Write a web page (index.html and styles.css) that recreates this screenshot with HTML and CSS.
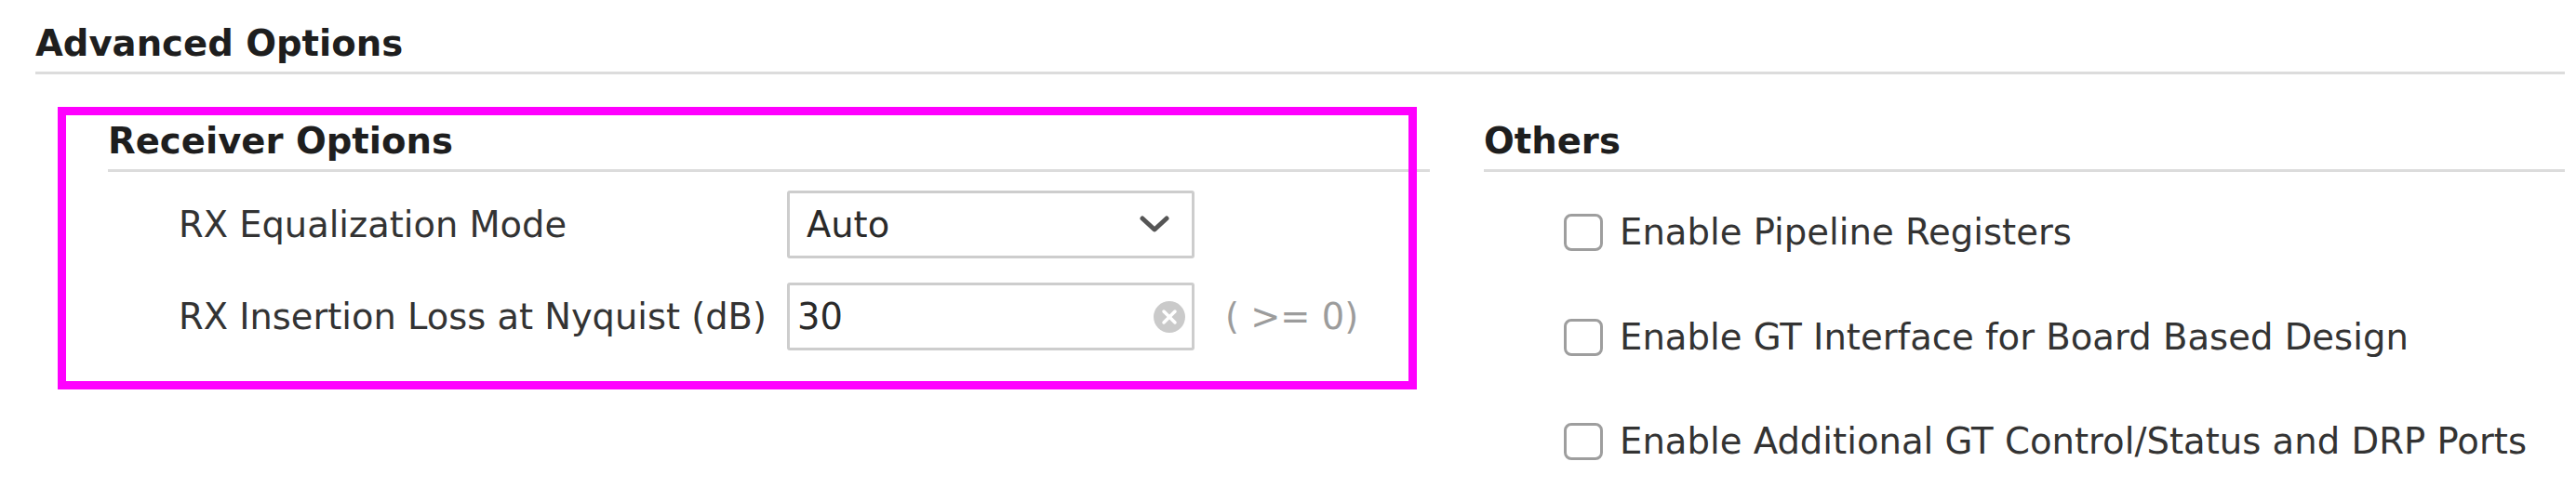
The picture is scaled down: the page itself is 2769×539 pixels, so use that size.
FILE: index.html
```html
<!DOCTYPE html>
<html lang="en">
<head>
    <meta charset="UTF-8">
    <title>Advanced Options</title>
    <link rel="stylesheet" href="styles.css">
</head>
<body>
    <div class="page">
        <h1 class="group-title">Advanced Options</h1>

        <div class="columns">
            <section class="panel panel-receiver">
                <h2 class="panel-title">Receiver Options</h2>
                <div class="field-grid">
                    <label class="field-label">RX Equalization Mode</label>
                    <div class="select-box">
                        <span class="select-value">Auto</span>
                        <svg class="chevron" width="32" height="19" viewBox="0 0 32 19">
                            <polyline points="3,3 16,15 29,3" fill="none" stroke="#555" stroke-width="5" stroke-linecap="round" stroke-linejoin="round"/>
                        </svg>
                    </div>
                    <span></span>

                    <label class="field-label">RX Insertion Loss at Nyquist (dB)</label>
                    <div class="text-box">
                        <span class="text-value">30</span>
                        <svg class="clear-icon" width="34" height="34" viewBox="0 0 34 34">
                            <circle cx="17" cy="17" r="17" fill="#cacaca"/>
                            <line x1="11" y1="11" x2="23" y2="23" stroke="#fff" stroke-width="3.5" stroke-linecap="round"/>
                            <line x1="23" y1="11" x2="11" y2="23" stroke="#fff" stroke-width="3.5" stroke-linecap="round"/>
                        </svg>
                    </div>
                    <span class="hint">( &gt;= 0)</span>
                </div>
            </section>

            <section class="panel panel-others">
                <h2 class="panel-title">Others</h2>
                <ul class="check-list">
                    <li><label><input type="checkbox"> Enable Pipeline Registers</label></li>
                    <li><label><input type="checkbox"> Enable GT Interface for Board Based Design</label></li>
                    <li><label><input type="checkbox"> Enable Additional GT Control/Status and DRP Ports</label></li>
                </ul>
            </section>
        </div>

        <!-- annotation frame drawn over the receiver panel -->
        <div class="highlight"></div>
    </div>
</body>
</html>
```

FILE: styles.css
```css
body {
    margin: 0;
    background: #fff;
    font-family: "DejaVu Sans", Verdana, sans-serif;
    color: #333;
}
.page {
    position: relative;
    padding: 0 12px 0 38px;
    height: 539px;
    box-sizing: border-box;
}
.group-title {
    margin: 0;
    padding: 22px 0 5px;
    font-size: 38.6px;
    line-height: 50px;
    font-weight: bold;
    color: #1e1e1e;
    border-bottom: 3px solid #dcdcdc;
}
.columns {
    display: flex;
    gap: 58px;
    margin-top: 47px;
    padding-left: 78px;
}
.panel-receiver {
    width: 1421px;
    flex: none;
}
.panel-others {
    flex: 1;
}
.panel-title {
    margin: 0;
    padding-bottom: 5px;
    font-size: 38.6px;
    line-height: 50px;
    font-weight: bold;
    color: #1e1e1e;
    border-bottom: 3px solid #dcdcdc;
}
.field-grid {
    display: grid;
    grid-template-columns: 654px 438px auto;
    grid-auto-rows: 73px;
    row-gap: 26px;
    align-items: center;
    margin-top: 20px;
    padding-left: 76px;
    font-size: 38.4px;
}
.field-label {
    white-space: nowrap;
    line-height: 44px;
}
.select-box,
.text-box {
    display: flex;
    align-items: center;
    height: 73px;
    box-sizing: border-box;
    border: 3px solid #cdcdcd;
    border-radius: 3px;
    background: #fff;
}
.select-box {
    padding: 0 24px 0 18px;
}
.text-box {
    padding: 0 7px 0 8px;
}
.select-value,
.text-value {
    flex: 1;
    line-height: 44px;
    color: #2a2a2a;
}
.hint {
    margin-left: 33px;
    color: #9c9c9c;
    white-space: nowrap;
}
.check-list {
    list-style: none;
    margin: 43px 0 0;
    padding: 0 0 0 86px;
    display: flex;
    flex-direction: column;
    gap: 68.5px;
    font-size: 38.6px;
}
.check-list label {
    display: flex;
    align-items: center;
    gap: 18px;
    height: 44px;
    line-height: 44px;
    white-space: nowrap;
}
.check-list input {
    appearance: none;
    -webkit-appearance: none;
    width: 42px;
    height: 40px;
    margin: 0;
    border: 3px solid #9e9e9e;
    border-radius: 8px;
    background: #fff;
    box-sizing: border-box;
}
.highlight {
    position: absolute;
    left: 62px;
    top: 115px;
    width: 1461px;
    height: 304px;
    box-sizing: border-box;
    border: 9px solid #ff00ff;
    pointer-events: none;
}
```
